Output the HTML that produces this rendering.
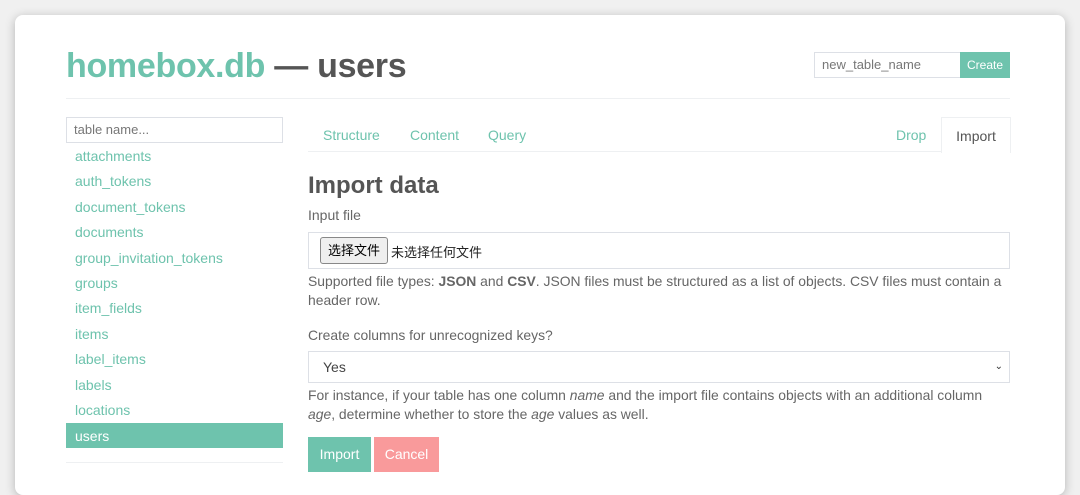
<!DOCTYPE html><html><head><meta charset="utf-8"><style>
body{margin:0;width:1080px;height:470px;overflow:hidden;background:#f0f0f0;font-family:"Liberation Sans","Noto Sans CJK SC",sans-serif;color:#666;font-size:14px}
.card{position:absolute;left:15px;top:15px;width:1050px;height:480px;background:#fff;border-radius:8px;box-shadow:0 2px 10px rgba(0,0,0,.25)}
.a{position:absolute}
.g{color:#6ec3ad}
h1{position:absolute;left:66px;top:47px;margin:0;font-size:34px;font-weight:bold;color:#555;letter-spacing:-0.3px}
.inp{position:absolute;border:1px solid #dde0e6;box-sizing:border-box;background:#fff;color:#777;font-size:13px;padding-left:7px}
.li{position:absolute;left:75px;font-size:14px;color:#6ec3ad}
.p{font-size:13.9px}
</style></head><body>
<div class="card"></div>
<h1><span class="g">homebox.db</span> — users</h1>
<div class="inp" style="left:814px;top:52px;width:147px;height:26px;line-height:24px">new_table_name</div>
<div class="a" style="left:960px;top:52px;width:50px;height:26px;background:#6ec3ad;color:#fff;font-size:12px;line-height:26px;text-align:center">Create</div>
<div class="a" style="left:66px;top:98px;width:944px;height:1px;background:#eef0f2"></div>
<div class="inp" style="left:66px;top:117px;width:217px;height:26px;line-height:24px">table name...</div>
<div class="li" style="top:148px">attachments</div>
<div class="li" style="top:173px">auth_tokens</div>
<div class="li" style="top:199px">document_tokens</div>
<div class="li" style="top:224px">documents</div>
<div class="li" style="top:250px">group_invitation_tokens</div>
<div class="li" style="top:275px">groups</div>
<div class="li" style="top:300px">item_fields</div>
<div class="li" style="top:326px">items</div>
<div class="li" style="top:351px">label_items</div>
<div class="li" style="top:377px">labels</div>
<div class="li" style="top:402px">locations</div>
<div class="a" style="left:66px;top:423px;width:217px;height:25px;background:#6ec3ad"></div>
<div class="li" style="top:428px;color:#fff">users</div>
<div class="a" style="left:66px;top:462px;width:217px;height:1px;background:#eef0f2"></div>
<div class="a" style="left:308px;top:151px;width:702px;height:1px;background:#eef0f2"></div>
<div class="a g" style="left:323px;top:127px">Structure</div>
<div class="a g" style="left:410px;top:127px">Content</div>
<div class="a g" style="left:488px;top:127px">Query</div>
<div class="a g" style="left:896px;top:127px">Drop</div>
<div class="a" style="left:941px;top:117px;width:68px;height:35px;border:1px solid #eef0f2;border-bottom:none;background:#fff;color:#555;text-align:center;line-height:36px">Import</div>
<div class="a" style="left:308px;top:172px;font-size:24px;font-weight:bold;color:#555">Import data</div>
<div class="a" style="left:308px;top:207px">Input file</div>
<div class="a" style="left:308px;top:232px;width:702px;height:37px;border:1px solid #dde0e6;box-sizing:border-box"></div>
<div class="a" style="left:320px;top:237px;width:66px;height:25px;border:1px solid #888;border-radius:3px;background:#efefef;color:#000;font-size:13px;line-height:25px;text-align:center">选择文件</div>
<div class="a" style="left:391px;top:242px;color:#222;font-size:13px">未选择任何文件</div>
<div class="a p" style="left:308px;top:272px;width:702px;line-height:19px">Supported file types: <b>JSON</b> and <b>CSV</b>. JSON files must be structured as a list of objects. CSV files must contain a header row.</div>
<div class="a p" style="left:308px;top:327px">Create columns for unrecognized keys?</div>
<div class="a" style="left:308px;top:351px;width:702px;height:32px;border:1px solid #dde0e6;box-sizing:border-box;color:#444;line-height:30px;padding-left:14px">Yes<span style="position:absolute;right:6px;font-size:10px;color:#333">&#8964;</span></div>
<div class="a p" style="left:308px;top:386px;width:702px;line-height:19px">For instance, if your table has one column <i>name</i> and the import file contains objects with an additional column <i>age</i>, determine whether to store the <i>age</i> values as well.</div>
<div class="a" style="left:308px;top:437px;width:63px;height:35px;background:#6ec3ad;color:#fff;line-height:35px;text-align:center">Import</div>
<div class="a" style="left:374px;top:437px;width:65px;height:35px;background:#f99a9b;color:#fff;line-height:35px;text-align:center">Cancel</div>
</body></html>
